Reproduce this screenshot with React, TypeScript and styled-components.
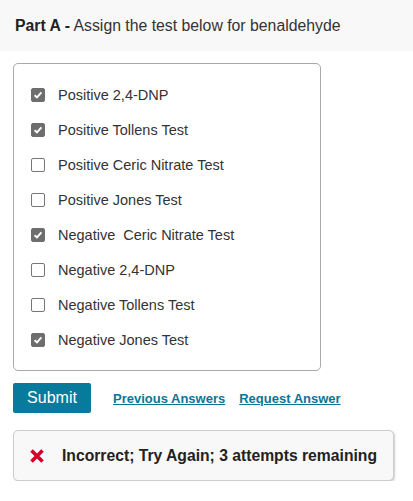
import * as React from 'react';
import styled, {createGlobalStyle} from 'styled-components';

const options = [
    {label: 'Positive 2,4-DNP', checked: true},
    {label: 'Positive Tollens Test', checked: true},
    {label: 'Positive Ceric Nitrate Test', checked: false},
    {label: 'Positive Jones Test', checked: false},
    {label: 'Negative\u00a0 Ceric Nitrate Test', checked: true},
    {label: 'Negative 2,4-DNP', checked: false},
    {label: 'Negative Tollens Test', checked: false},
    {label: 'Negative Jones Test', checked: true},
];

export default function App() {
    return (
        <>
            <GlobalStyle/>
            <Header>
                <strong>Part A -</strong> Assign the test below for benaldehyde
            </Header>
            <Body>
                <OptionBox>
                    {options.map(option => (
                        <OptionRow key={option.label}>
                            <Check checked={option.checked}>
                                {option.checked && (
                                    <svg width="10" height="10" viewBox="0 0 10 10">
                                        <path d="M1.6 5.2 L4 7.4 L8.4 2.4" fill="none" stroke="#fff" strokeWidth="2"/>
                                    </svg>
                                )}
                            </Check>
                            <span>{option.label}</span>
                        </OptionRow>
                    ))}
                </OptionBox>
                <Actions>
                    <SubmitButton>Submit</SubmitButton>
                    <LinkButton>Previous Answers</LinkButton>
                    <LinkButton>Request Answer</LinkButton>
                </Actions>
                <Feedback>
                    <svg width="16" height="16" viewBox="0 0 16 16">
                        <path d="M2.5 2.5 L13.5 13.5 M13.5 2.5 L2.5 13.5" stroke="#d4002a" strokeWidth="3.6"/>
                    </svg>
                    <span>Incorrect; Try Again; 3 attempts remaining</span>
                </Feedback>
            </Body>
        </>
    );
}

const GlobalStyle = createGlobalStyle`
  body {
    margin: 0;
    background: #fff;
    font-family: "Liberation Sans", Arial, sans-serif;
    color: #333;
  }
`;

const Header = styled.div`
  height: 51px;
  box-sizing: border-box;
  padding: 17px 15px 0;
  background: #f8f8f8;
  font-size: 15.8px;
  color: #333;

  strong {
    font-weight: bold;
    color: #222;
  }
`;

const Body = styled.div`
  padding: 12px 13px 0;
`;

const OptionBox = styled.div`
  width: 308px;
  height: 308px;
  box-sizing: border-box;
  border: 1px solid #aaa;
  border-radius: 5px;
  padding: 13px 0 0 17px;
`;

const OptionRow = styled.div`
  display: flex;
  align-items: center;
  gap: 13px;
  height: 35px;
  font-size: 14.5px;
  color: #333;
`;

const Check = styled.span<{ checked: boolean }>`
  display: flex;
  align-items: center;
  justify-content: center;
  width: 14px;
  height: 14px;
  box-sizing: border-box;
  border-radius: 2px;
  border: 1px solid ${props => props.checked ? '#6e6e6e' : '#767676'};
  background: ${props => props.checked ? '#6e6e6e' : '#fff'};
`;

const Actions = styled.div`
  display: flex;
  align-items: center;
  margin-top: 12px;
`;

const SubmitButton = styled.button`
  width: 78px;
  height: 30px;
  border: none;
  border-radius: 2px;
  background: #087a9c;
  color: #fff;
  font-family: "Liberation Sans", Arial, sans-serif;
  font-size: 16px;
  padding: 0;
  margin-right: 22px;
`;

const LinkButton = styled.a`
  color: #0b7597;
  font-size: 13px;
  font-weight: bold;
  text-decoration: underline;
  margin-right: 14px;
`;

const Feedback = styled.div`
  display: flex;
  align-items: center;
  gap: 17px;
  width: 381px;
  height: 51px;
  box-sizing: border-box;
  margin-top: 17px;
  padding: 0 15px;
  background: #f8f8f8;
  border: 1px solid #ccc;
  border-radius: 5px;
  box-shadow: 1px 1px 2px rgba(0, 0, 0, 0.2);
  font-size: 15.7px;
  font-weight: bold;
  white-space: nowrap;
  color: #222;
`;
